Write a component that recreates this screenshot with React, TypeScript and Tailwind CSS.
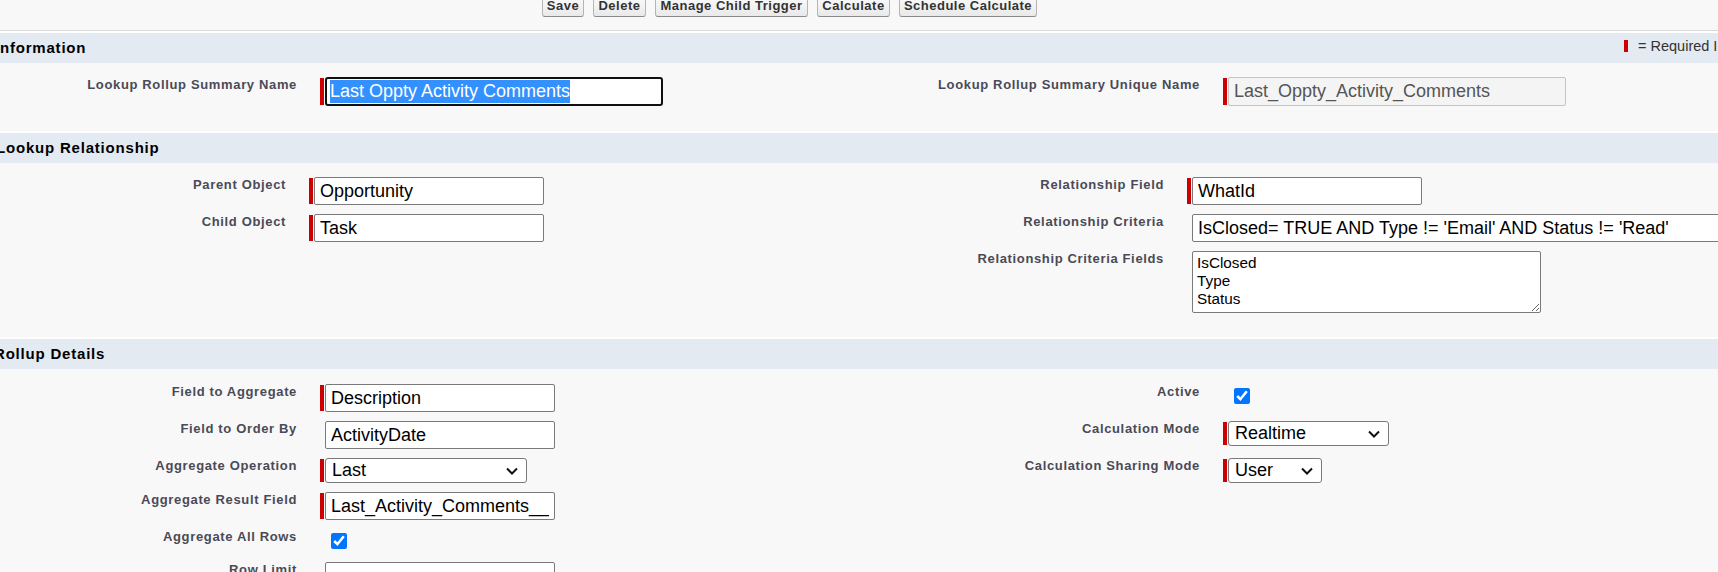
import type { ReactNode } from "react";

// Salesforce-classic style edit page for a lookup rollup summary record.
const LABEL =
  "text-right text-[13px] font-bold tracking-[0.65px] leading-[16px] text-[#4a4a56] whitespace-nowrap";
const INPUT =
  "h-[28px] border border-[#7a7a7a] rounded-[2px] bg-white px-[5px] text-[18px] text-black outline-none";

function Btn({ label, w }: { label: string; w: string }) {
  return (
    <button
      type="button"
      className={`${w} h-[26px] shrink-0 rounded-[3px] border border-[#b5b5b5] border-b-[#8a8a8a] bg-linear-to-b from-[#ffffff] to-[#e9e9e9] pt-[4px] text-center align-top text-[13px] font-bold leading-[16px] tracking-[0.5px] text-[#333]`}
    >
      {label}
    </button>
  );
}

function Label({ children }: { children?: ReactNode }) {
  return <div className={LABEL}>{children}</div>;
}

// Field cell: red "required" block (or an empty spacer) followed by the control.
function Field({ req, children }: { req?: boolean; children: ReactNode }) {
  return (
    <div className="flex items-stretch self-start pl-[23px]">
      {req ? (
        <span className="my-[1px] mr-[1px] w-[4px] shrink-0 bg-[#cc0000]" />
      ) : (
        <span className="w-[5px] shrink-0" />
      )}
      {children}
    </div>
  );
}

function Select({ value, w }: { value: string; w: string }) {
  return (
    <div
      className={`${w} flex h-[25px] items-center justify-between rounded-[3px] border border-[#7a7a7a] bg-white pl-[6px] pr-[8px] text-[18px] text-black`}
    >
      <span>{value}</span>
      <svg width="12" height="8" viewBox="0 0 12 8" fill="none">
        <polyline points="1,1.5 6,6.5 11,1.5" stroke="#111" strokeWidth="2" />
      </svg>
    </div>
  );
}

function Check() {
  return (
    <div className="h-[24px]">
      <input
        type="checkbox"
        readOnly
        checked
        className="m-0 ml-[6px] mt-[4px] h-[16px] w-[16px] accent-[#0075ff]"
      />
    </div>
  );
}

function Band({ title, shift, legend }: { title: string; shift: string; legend?: boolean }) {
  return (
    <div className="border-t-2 border-white">
      <div className="flex h-[30px] items-center bg-[#e3eaf2]">
        <div className="w-[1624px] shrink-0">
          <h3 className={`${shift} text-[15px] font-bold leading-[18px] tracking-[0.8px] text-black`}>
            {title}
          </h3>
        </div>
        {legend && (
          <div className="mb-[4px] flex shrink-0 items-center whitespace-nowrap">
            <span className="h-[12px] w-[4px] bg-[#cc0000]" />
            <span className="ml-[10px] text-[14.5px] leading-[17px] text-[#333]">= Required Information</span>
          </div>
        )}
      </div>
    </div>
  );
}

export default function App() {
  return (
    <div className="h-[572px] w-[1718px] overflow-hidden bg-[#f8f8f8] font-['Liberation_Sans',Arial,sans-serif]">
      {/* button bar, scrolled so the tops of the buttons are cut off */}
      <div className="flex h-[31px] items-start overflow-hidden border-b border-[#d9d9d9]">
        <div className="-mt-[9px] flex gap-[9px] pl-[542px]">
          <Btn label="Save" w="w-[42px]" />
          <Btn label="Delete" w="w-[53px]" />
          <Btn label="Manage Child Trigger" w="w-[153px]" />
          <Btn label="Calculate" w="w-[73px]" />
          <Btn label="Schedule Calculate" w="w-[138px]" />
        </div>
      </div>

      <Band title="Information" shift="-ml-[5px]" legend />
      <div className="grid grid-cols-[297px_603px_300px_1fr] items-start gap-y-[9px] pb-[25px] pt-[14px]">
        <Label>Lookup Rollup Summary Name</Label>
        <Field req>
          <div className="flex h-[29px] w-[338px] items-center rounded-[3px] border-2 border-[#101010] bg-white pl-[3px]">
            <span className="inline-block h-[23px] bg-[#3390ff] text-[18px] leading-[23px] text-white">
              Last Oppty Activity Comments
            </span>
          </div>
        </Field>
        <Label>Lookup Rollup Summary Unique Name</Label>
        <Field req>
          <input
            readOnly
            value="Last_Oppty_Activity_Comments"
            className="h-[29px] w-[338px] rounded-[2px] border border-[#c4c4c4] bg-[#f4f4f4] px-[5px] text-[18px] text-[#555] outline-none"
          />
        </Field>
      </div>

      <Band title="Lookup Relationship" shift="-ml-[4px]" />
      <div className="grid grid-cols-[286px_578px_300px_1fr] items-start gap-y-[9px] pb-[24px] pt-[14px]">
        <Label>Parent Object</Label>
        <Field req>
          <input readOnly value="Opportunity" className={`${INPUT} w-[230px]`} />
        </Field>
        <Label>Relationship Field</Label>
        <Field req>
          <input readOnly value="WhatId" className={`${INPUT} w-[230px]`} />
        </Field>

        <Label>Child Object</Label>
        <Field req>
          <input readOnly value="Task" className={`${INPUT} w-[230px]`} />
        </Field>
        <Label>Relationship Criteria</Label>
        <Field>
          <input
            readOnly
            value="IsClosed= TRUE AND Type != 'Email' AND Status != 'Read'"
            className={`${INPUT} w-[560px]`}
          />
        </Field>

        <div />
        <div />
        <Label>Relationship Criteria Fields</Label>
        <Field>
          <textarea
            readOnly
            defaultValue={"IsClosed\nType\nStatus"}
            className="h-[62px] w-[349px] rounded-[2px] border border-[#7a7a7a] bg-white px-[4px] pt-[2px] text-[15.3px] leading-[18px] text-black outline-none"
          />
        </Field>
      </div>

      <Band title="Rollup Details" shift="-ml-[6px]" />
      <div className="grid grid-cols-[297px_603px_300px_1fr] items-start gap-y-[9px] pt-[15px]">
        <Label>Field to Aggregate</Label>
        <Field req>
          <input readOnly value="Description" className={`${INPUT} w-[230px]`} />
        </Field>
        <Label>Active</Label>
        <Field>
          <Check />
        </Field>

        <Label>Field to Order By</Label>
        <Field>
          <input readOnly value="ActivityDate" className={`${INPUT} w-[230px]`} />
        </Field>
        <Label>Calculation Mode</Label>
        <Field req>
          <Select value="Realtime" w="w-[161px]" />
        </Field>

        <Label>Aggregate Operation</Label>
        <Field req>
          <Select value="Last" w="w-[202px]" />
        </Field>
        <Label>Calculation Sharing Mode</Label>
        <Field req>
          <Select value="User" w="w-[94px]" />
        </Field>

        <Label>Aggregate Result Field</Label>
        <Field req>
          <input readOnly value="Last_Activity_Comments__c" className={`${INPUT} w-[230px]`} />
        </Field>
        <div />
        <div />

        <Label>Aggregate All Rows</Label>
        <Field>
          <Check />
        </Field>
        <div />
        <div />

        <Label>Row Limit</Label>
        <Field>
          <input readOnly value="" className={`${INPUT} w-[230px]`} />
        </Field>
        <div />
        <div />
      </div>
    </div>
  );
}
